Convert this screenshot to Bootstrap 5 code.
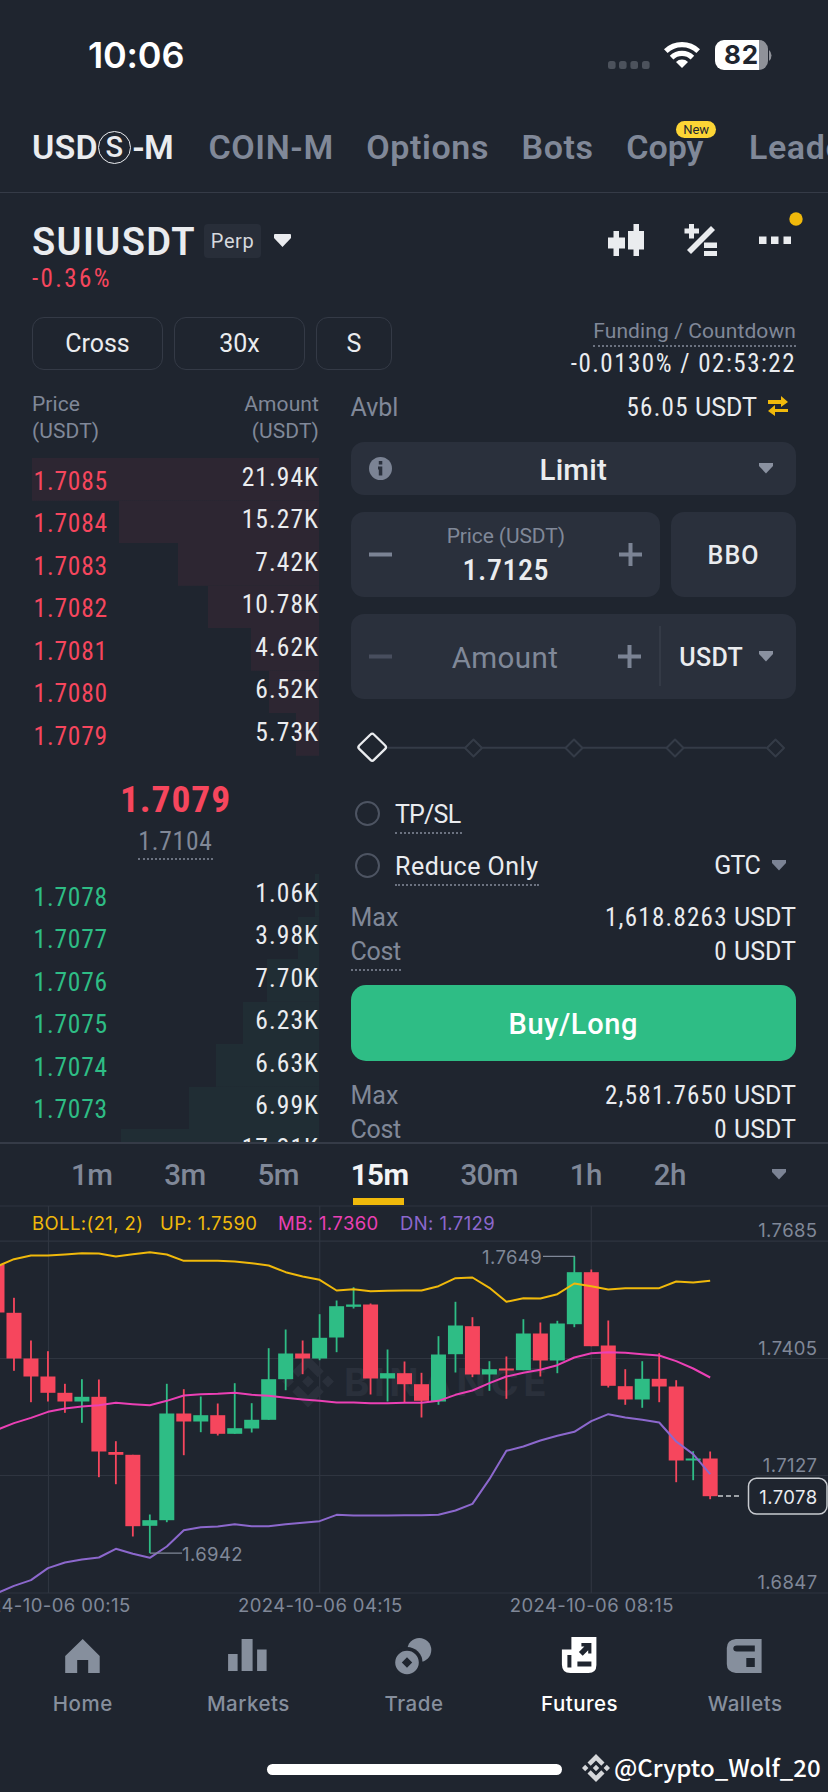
<!DOCTYPE html>
<html lang="en" data-bs-theme="dark">
<head>
<meta charset="utf-8">
<meta name="viewport" content="width=device-width, initial-scale=1">
<title>SUIUSDT Perp</title>
<link rel="stylesheet" href="https://cdn.jsdelivr.net/npm/bootstrap@5.3.0/dist/css/bootstrap.min.css">
<style>
  :root { --bg:#1f252f; --panel:#2a303c; --edge:#323843; --ink:#eaecef; --dim:#808898; --red:#f6465d; --green:#2ebd85; --gold:#f0b90b; }
  body { background:var(--bg); color:var(--ink); font-family:Roboto,"Liberation Sans",sans-serif; font-size:25px; line-height:30px; }
  svg { display:block; flex:none; }
  .screen { width:828px; height:1792px; overflow:hidden; }
  .dim { color:var(--dim); }
  .red { color:var(--red); }
  .green { color:var(--green); }
  .din { font-family:"Roboto Condensed",Roboto,sans-serif; letter-spacing:1.25px; }
  .dotted { border-bottom:2px dotted #6b7280; }
  .status { height:110px; font-family:Inter,sans-serif; padding:0 56px 0 88px; }
  .clock { font-size:36px; font-weight:600; color:#fff; letter-spacing:-.2px; }
  .battery { width:53px; height:30px; border-radius:9px; background:linear-gradient(90deg,#fff 0 44px,#8f9299 44px); color:var(--bg); font-size:26px; font-weight:700; letter-spacing:.8px; }
  .tabs { height:82px; padding:0 0 8px 32px; gap:32.500px; font-size:34px; font-weight:600; color:var(--dim); white-space:nowrap; letter-spacing:.6px; }
  .tabs .on { color:var(--ink); letter-spacing:.2px; margin-right:3px; }
  .ring { width:33px; height:33px; border:1.5px solid var(--ink); border-radius:50%; font-size:29px; font-weight:500; }
  .newtag { top:-11px; left:50px; width:40px; height:17px; border-radius:9px; background:#fcd535; color:#202630; font-size:13px; font-weight:400; line-height:17px; letter-spacing:0; }
  .rule { height:1px; background:#353b47; }
  .pair { font-size:38px; font-weight:600; letter-spacing:1.4px; line-height:42px; }
  .perp { width:57px; height:34px; background:#282e39; border-radius:4px; font-size:20px; letter-spacing:.6px; color:#d6d9de; }
  .chip { height:53px; border:1.5px solid #343a46; border-radius:12px; color:var(--ink); font-size:25px; line-height:28px; }
  .small-cap { font-size:21px; line-height:27px; letter-spacing:.1px; }
  .book { width:287px; font-size:25.5px; }
  .lvl { height:42.5px; padding-top:3px; letter-spacing:1.05px; }
  .lvl .amt { padding-bottom:8px; }
  .lvl .prc { padding-left:1.5px; letter-spacing:.8px; }
  .ask { background:linear-gradient(#2d2632,#2d2632) right/var(--w) 100% no-repeat; }
  .bid { background:linear-gradient(#202d34,#202d34) right/var(--w) 100% no-repeat; }
  .ticket { width:445.5px; }
  .panel { background:var(--panel); border-radius:13px; }
  .opt { width:25px; height:25px; border:2px solid #4d5462; border-radius:50%; }
  .buy { height:76.5px; border-radius:15px; background:var(--green); color:#fff; font-size:29px; font-weight:500; letter-spacing:.6px; line-height:76px; }
  .frames { height:61px; gap:52px; padding-left:71px; font-size:29.5px; font-weight:500; color:var(--dim); letter-spacing:-.6px; }
  .frames > div { padding-top:2px; }
  .frames .on { color:#f2f3f5; font-weight:700; }
  .frames .on::after { content:""; position:absolute; left:2px; width:51.5px; height:6.5px; bottom:0; background:var(--gold); }
  .plot { font-family:Inter,sans-serif; font-size:18.5px; letter-spacing:.4px; }
  .dock { font-family:Inter,sans-serif; font-size:20.5px; font-weight:500; letter-spacing:.5px; color:#868f9d; }
  .bar-home { width:295px; height:11px; border-radius:6px; background:#fff; }
  .handle { font-family:"Noto Sans CJK SC",sans-serif; font-size:24px; font-weight:500; color:#fff; margin-top:-4px; }
</style>
</head>
<body>
<div class="screen">

  <header class="status d-flex align-items-center justify-content-between">
    <div class="clock">10:06</div>
    <div class="d-flex align-items-center">
      <svg width="44" height="8" viewBox="0 0 44 8" fill="#4c525c" style="margin:19px 12px 0 0"><rect x="1" width="7.6" height="8" rx="2.5"/><rect x="12" width="7.6" height="8" rx="2.5"/><rect x="23.400" width="7.6" height="8" rx="2.5"/><rect x="35" width="7.6" height="8" rx="2.5"/></svg>
      <svg width="38" height="28" viewBox="0 0 38 28" fill="none" stroke="#fff" stroke-width="5.200"><path d="M2.800 10.200A23.500 23.500 0 0 1 35.200 10.200"/><path d="M8.600 16.600A15 15 0 0 1 29.400 16.600"/><path d="M19 27 13 21A8.500 8.500 0 0 1 25 21Z" fill="#fff" stroke="none"/></svg>
      <div class="battery d-flex align-items-center justify-content-center" style="margin-left:14px">82</div>
      <svg width="4" height="11" viewBox="0 0 4 11"><path d="M1 0Q3.500 2 3.500 5.500T1 11Z" fill="#8f9299"/></svg>
    </div>
  </header>

  <nav class="tabs d-flex align-items-center">
    <div class="on d-flex align-items-center">USD<span class="ring d-flex align-items-center justify-content-center">S</span><span style="letter-spacing:-.8px;margin-left:1.500px">-M</span></div>
    <div>COIN-M</div><div>Options</div><div>Bots</div>
    <div class="position-relative" style="letter-spacing:0;margin-right:13px">Copy<span class="newtag position-absolute text-center">New</span></div>
    <div>Leaderboard</div>
  </nav>
  <div class="rule"></div>

  <section class="d-flex justify-content-between" style="height:124px;padding:28px 25px 0 32px">
    <div>
      <div class="d-flex align-items-center">
        <div class="pair">SUIUSDT</div>
        <div class="perp d-flex align-items-center justify-content-center" style="margin:-2px 0 0 8px">Perp</div>
        <svg width="18" height="14" viewBox="0 0 18 14" style="margin:-2px 0 0 13px"><path d="M0 1Q0 0 1 0H16Q17 0 17 1V4L8.500 13 0 4Z" fill="#eaecef"/></svg>
      </div>
      <div class="red din" style="letter-spacing:2.400px;line-height:31px">-0.36%</div>
    </div>
    <svg width="195" height="50" viewBox="608 208 195 50" fill="#eaecef" style="margin-top:-13px">
      <path d="M608 237.500h5.500v-6.500h5.500v6.500h6v11h-6v7.500h-5.500v-7.500h-5.500zM628 231h5.500v-7h5.500v7h5v18.500h-5v6.500h-5.500v-6.500h-5.500z"/>
      <path d="M689 224h5v4.500h5v5h-5v5h-5v-5h-4.500v-5h4.500zM711 226l4 4-24 24-4-4zM704 242.500h13v5.500h-13zM704 251h13v5h-13z"/>
      <path d="M759 236.500h7.500v7.500h-7.500zM771 236.500h7.500v7.500h-7.500zM783.500 236.500h7.500v7.500h-7.500z"/><circle cx="796" cy="219" r="6.700" fill="#f0b90b"/>
    </svg>
  </section>

  <section class="d-flex justify-content-between" style="height:73px;padding:0 32px">
    <div class="d-flex" style="gap:11px">
      <button class="btn chip p-0" style="width:131px">Cross</button>
      <button class="btn chip p-0" style="width:131px">30x</button>
      <button class="btn chip p-0" style="width:76px">S</button>
    </div>
    <div class="text-end">
      <div class="small-cap dim" style="height:30px"><span class="dotted d-inline-block" style="height:30px;line-height:29px">Funding / Countdown</span></div>
      <div class="din" style="letter-spacing:1.500px;line-height:34px">-0.0130% / 02:53:22</div>
    </div>
  </section>

  <main class="d-flex justify-content-between overflow-hidden" style="height:752px;padding:0 32px">
    <div class="book">
      <div class="d-flex justify-content-between small-cap dim" style="height:68px;padding-top:1px"><div>Price<br>(USDT)</div><div class="text-end">Amount<br>(USDT)</div></div>
      <div id="asks"></div>
      <div class="text-center" style="height:118.500px;padding-top:19px">
        <div class="red din fw-bold" style="font-size:37.500px;line-height:48px;letter-spacing:.9px">1.7079</div>
        <div class="dim din dotted d-inline-block" style="line-height:37px;height:37px;letter-spacing:.8px">1.7104</div>
      </div>
      <div id="bids"></div>
    </div>

    <div class="ticket">
      <div class="d-flex align-items-center" style="height:36px;margin-bottom:16px">
        <span class="dim me-auto">Avbl</span><span class="din">56.05</span><span>&nbsp;USDT</span>
        <svg width="22" height="20" viewBox="0 0 22 20" fill="#f0b90b" style="margin:-4px 7px 0 10px"><path d="M1 4h13V0l7 6-7 5V8H1zM21 13H8V9l-7 6 7 5v-4h13z"/></svg>
      </div>

      <div class="panel d-flex align-items-center" style="height:52.500px;padding:0 23px 0 18px">
        <svg width="23" height="23" viewBox="0 0 23 23"><circle cx="11.500" cy="11.500" r="11.500" fill="#7b8394"/><path d="M9.800 4h3.500v3.500H9.800zM9 9.500h4.300v9H9.800v-6H9z" fill="#2a303c"/></svg>
        <span class="flex-fill text-center" style="font-size:29.500px;font-weight:500;margin:4px 4px 0 0;letter-spacing:.2px">Limit</span>
        <svg width="14" height="11" viewBox="0 0 14 11"><path d="M0 0H14V3L7 10.500 0 3Z" fill="#8a91a0"/></svg>
      </div>

      <div class="d-flex" style="gap:11px;margin-top:17.500px">
        <div class="panel d-flex align-items-center" style="width:309.500px;height:84.500px;padding:0 18px">
          <svg width="23" height="23" viewBox="0 0 23 23"><path d="M0 9.500h23v4H0z" fill="#7b8394"/></svg>
          <div class="flex-fill text-center" style="margin:-3px 0 0 1px"><div class="small-cap dim" style="line-height:34px;letter-spacing:-.1px">Price (USDT)</div><div class="din" style="font-size:30px;font-weight:500;line-height:33px;letter-spacing:.5px">1.7125</div></div>
          <svg width="23" height="23" viewBox="0 0 23 23"><path d="M0 9.500h9.500V0h4v9.500H23v4h-9.500V23h-4v-9.500H0z" fill="#7b8394"/></svg>
        </div>
        <div class="panel flex-fill d-flex align-items-center justify-content-center" style="font-weight:500;letter-spacing:1px;padding-top:4px">BBO</div>
      </div>

      <div class="panel d-flex align-items-center" style="height:85px;margin-top:17px;padding:0 23px 0 18px">
        <svg width="23" height="23" viewBox="0 0 23 23"><path d="M0 9.500h23v4H0z" fill="#484e5e"/></svg>
        <div class="flex-fill text-center dim" style="font-size:29.500px;letter-spacing:.4px;padding-top:4px">Amount</div>
        <svg width="23" height="23" viewBox="0 0 23 23"><path d="M0 9.500h9.500V0h4v9.500H23v4h-9.500V23h-4v-9.500H0z" fill="#7b8394"/></svg>
        <div style="width:2px;height:60px;background:#343a46;margin:0 18px 0 18px"></div>
        <span style="font-weight:500;letter-spacing:.3px;padding-top:4px">USDT</span>
        <svg width="14" height="11" viewBox="0 0 14 11" style="margin-left:16px"><path d="M0 0H14V3L7 10.500 0 3Z" fill="#8a91a0"/></svg>
      </div>

      <svg width="445.500" height="93" viewBox="350.500 699 445.500 93" fill="#1f252f" stroke="#343b47" stroke-width="2" stroke-linejoin="round">
        <path d="M387 747.700H766"/>
        <path d="M473 739.500l8.500 8.500-8.500 8.500-8.500-8.500zM573.500 739.500l8.500 8.500-8.500 8.500-8.500-8.500zM674.500 739.500l8.500 8.500-8.500 8.500-8.500-8.500zM775 739.500l8.500 8.500-8.500 8.500-8.500-8.500z"/>
        <path d="M370 734.500q1.700-1.800 3.400 0l11.300 11q1.700 1.700 0 3.400l-11.300 11q-1.700 1.700-3.400 0l-11.300-11q-1.700-1.700 0-3.400z" stroke="#eaecef" stroke-width="2.300"/>
      </svg>

      <div class="d-flex align-items-center" style="height:44px;margin-left:4.500px"><span class="opt"></span><span class="dotted" style="margin:0 0 0 15px;height:41px;line-height:43px;letter-spacing:-.8px;padding-right:2px">TP/SL</span></div>
      <div class="d-flex align-items-center" style="height:44px;margin:8px 0 0 4.500px"><span class="opt"></span><span class="dotted me-auto" style="margin-left:15px;height:41px;line-height:43px;letter-spacing:.5px">Reduce Only</span><span style="letter-spacing:-.7px">GTC</span><svg width="14" height="11" viewBox="0 0 14 11" style="margin:0 10px 0 12px"><path d="M0 0H14V3L7 10.500 0 3Z" fill="#7b8394"/></svg></div>

      <div class="d-flex" style="height:33.500px;line-height:33px;margin-top:13.500px"><span class="dim me-auto">Max</span><span class="din">1,618.8263</span><span>&nbsp;USDT</span></div>
      <div class="d-flex" style="height:50px;line-height:33px"><span class="dim dotted me-auto" style="height:36px;letter-spacing:-.3px">Cost</span><span class="din">0</span><span>&nbsp;USDT</span></div>
      <button class="btn buy w-100 p-0 d-block border-0"><span style="position:relative;top:1px">Buy/Long</span></button>
      <div class="d-flex" style="height:33.500px;line-height:33px;margin-top:18px"><span class="dim me-auto">Max</span><span class="din">2,581.7650</span><span>&nbsp;USDT</span></div>
      <div class="d-flex" style="height:33.500px;line-height:33px"><span class="dim me-auto" style="letter-spacing:-.3px">Cost</span><span class="din">0</span><span>&nbsp;USDT</span></div>
    </div>
  </main>
  <div class="rule" style="height:1.500px"></div>

  <nav class="frames d-flex align-items-center">
    <div>1m</div><div>3m</div><div>5m</div><div class="on position-relative h-100 d-flex align-items-center">15m</div><div>30m</div><div>1h</div><div>2h</div>
    <svg class="ms-auto" width="14" height="11" viewBox="0 0 14 11" style="margin-right:42px"><path d="M0 0H14V3L7 10.500 0 3Z" fill="#7b8394"/></svg>
  </nav>

  <svg class="plot" width="828" height="415.500" viewBox="0 1204.500 828 415.500" fill="#808898">
    <path d="M0 1205.500H828M0 1240.700H828M0 1358H828M0 1475H828M0 1592.500H828M48.500 1205V1592M319.700 1205V1592M591.300 1205V1592" stroke="#2f3540" stroke-width="1.200" fill="none"/>
    <g fill="#2a303b">
      <path transform="translate(308 1381) scale(1.850)" d="M0-14 8.500-5.500 5.300-2.300 0-7.600-5.300-2.300-8.500-5.500ZM0 14 8.500 5.500 5.300 2.300 0 7.600-5.300 2.300-8.500 5.500ZM0-3.200 3.200 0 0 3.200-3.200 0ZM-10.800-3.200-7.600 0-10.800 3.200-14 0ZM10.800-3.200 14 0 10.800 3.200 7.600 0Z"/>
      <text x="344" y="1395.500" font-size="38.500" font-weight="700" textLength="203">BINANCE</text>
    </g>
    <g id="candles"></g>
    <g id="bands" fill="none" stroke-width="2" stroke-linejoin="round"></g>
    <path d="M543 1255.800H575M150 1552.700H182" stroke="#808898" stroke-width="1.200"/>
    <path d="M718 1495.500H739" stroke="#c8cbd0" stroke-width="1.500" stroke-dasharray="5 3"/>
    <text x="32" y="1229.300" fill="#f0b90b">BOLL:(21, 2)</text><text x="160" y="1229.300" fill="#f0b90b">UP: 1.7590</text><text x="278" y="1229.300" fill="#eb40b5">MB: 1.7360</text><text x="400" y="1229.300" fill="#8c68cd">DN: 1.7129</text>
    <text x="482" y="1263.500">1.7649</text><text x="182" y="1560.200">1.6942</text>
    <g text-anchor="end"><text x="817.500" y="1236.800">1.7685</text><text x="817.500" y="1354">1.7405</text><text x="817.500" y="1471">1.7127</text><text x="817.500" y="1588">1.6847</text></g>
    <g text-anchor="middle"><text x="48.500" y="1611.300">2024-10-06 00:15</text><text x="320.300" y="1611.300">2024-10-06 04:15</text><text x="591.800" y="1611.300">2024-10-06 08:15</text></g>
    <rect x="748.500" y="1477.800" width="78.500" height="35.800" rx="8" fill="#1f252f" stroke="#c8cbd0" stroke-width="1.500"/>
    <text x="817.500" y="1503" text-anchor="end" fill="#eaecef">1.7078</text>
  </svg>

  <nav class="dock d-flex text-center" style="height:134px;padding-top:14px;line-height:28px">
    <div style="width:165.600px"><svg class="mx-auto" width="40" height="44" viewBox="62.800 1634 40 44" fill="currentColor"><path d="M82.500 1639 99.500 1656V1673H88V1660H77V1673H65V1656Z"/></svg><div class="pt-2 mt-1">Home</div></div>
    <div style="width:165.600px"><svg class="mx-auto" width="40" height="44" viewBox="228.400 1634 40 44" fill="currentColor"><path d="M228.500 1654h9.500v17h-9.500zM242 1639h11v32h-11zM257.500 1649.500h9.500v21.500h-9.500z"/></svg><div class="pt-2 mt-1">Markets</div></div>
    <div style="width:165.600px"><svg class="mx-auto" width="40" height="44" viewBox="394 1634 40 44" fill="currentColor"><circle cx="419.300" cy="1650" r="12"/><circle cx="407" cy="1662.500" r="15.500" fill="#1f252f"/><path fill-rule="evenodd" d="M407 1650.700a11.800 11.800 0 1 1 0 23.600a11.800 11.800 0 1 1 0-23.600zM407 1657.300l-5.200 5.200 5.200 5.200 5.200-5.200z"/></svg><div class="pt-2 mt-1">Trade</div></div>
    <div class="text-white" style="width:165.600px"><svg class="mx-auto" width="40" height="44" viewBox="559.600 1634 40 44" fill="currentColor"><path fill-rule="evenodd" d="M571 1637h25v28q0 8-8 8h-18q-8.500 0-8.500-8.500V1649.500H571zM567 1655v12.500h4V1655zM577 1661.500v5h14v-5zM581 1643v3.500h3l-5.500 5.500 3.800 3.800 5.500-5.500v3.200h3.200V1643z"/></svg><div class="pt-2 mt-1">Futures</div></div>
    <div style="width:165.600px"><svg class="mx-auto" width="40" height="44" viewBox="725.200 1634 40 44" fill="currentColor"><path fill-rule="evenodd" d="M736 1639h25.800v34H736q-9-1-9-9v-16q0-8 9-9zM737 1645.500q-3.500 0-3.500 3t3.500 3h18v-6zM746.500 1658v9h8.500v-9z"/></svg><div class="pt-2 mt-1">Wallets</div></div>
  </nav>

  <footer class="d-flex align-items-center" style="height:30px;padding-left:267px">
    <div class="bar-home"></div>
    <svg width="28" height="28" viewBox="-14 -14 28 28" fill="#d5d7da" style="margin:-2px 4px 0 20px"><path d="M0-14 8.500-5.500 5.300-2.300 0-7.600-5.300-2.300-8.500-5.500ZM0 14 8.500 5.500 5.300 2.300 0 7.600-5.300 2.300-8.500 5.500ZM0-3.200 3.200 0 0 3.200-3.200 0ZM-10.800-3.200-7.600 0-10.800 3.200-14 0ZM10.800-3.200 14 0 10.800 3.200 7.600 0Z"/></svg>
    <span class="handle">@Crypto_Wolf_20</span>
  </footer>
</div>

<script src="https://cdn.jsdelivr.net/npm/bootstrap@5.3.0/dist/js/bootstrap.bundle.min.js"></script>
<script>
// Order book: price, amount, depth bar width
const asks = [['1.7085','21.94K',287],['1.7084','15.27K',200],['1.7083','7.42K',141],['1.7082','10.78K',111],['1.7081','4.62K',68],['1.7080','6.52K',50],['1.7079','5.73K',23]];
const bids = [['1.7078','1.06K',4],['1.7077','3.98K',21],['1.7076','7.70K',52],['1.7075','6.23K',76],['1.7074','6.63K',103],['1.7073','6.99K',130],['1.7072','17.21K',198]];
const level = (side, tone) => ([p, a, w]) => `<div class="lvl din ${side} d-flex align-items-center justify-content-between" style="--w:${w}px"><span class="prc ${tone}">${p}</span><span class="amt">${a}</span></div>`;
document.getElementById('asks').innerHTML = asks.map(level('ask','red')).join('');
document.getElementById('bids').innerHTML = bids.map(level('bid','green')).join('');

// Candles: colour, wick top, wick bottom, body top, body bottom
const bars = [
['r',1263.7,1312,1263.7,1312],['r',1297.3,1370.3,1312.3,1358],['r',1340,1401.7,1358,1376],['r',1350.7,1401,1376,1392.3],['r',1383.3,1412.3,1392.3,1401],
['g',1378.7,1422.3,1396.3,1401],['r',1379,1476.7,1396.3,1451],['r',1440.7,1483.7,1451.5,1454.3],['r',1454.3,1536,1454.3,1525.7],['g',1514,1552.7,1519.7,1525.3],
['g',1383.3,1521.7,1413,1519.7],['r',1388.7,1454.7,1413,1421],['g',1396,1431.7,1414.7,1421],['r',1403,1435,1414.7,1433.3],['g',1382.7,1433.3,1427.7,1433.3],
['g',1402.7,1432,1419.3,1428],['g',1347.7,1419.3,1378.7,1419.3],['g',1329,1389.7,1353,1378.7],['r',1340,1373.7,1353,1358],['g',1313.7,1359.7,1337.3,1358],
['g',1300,1351.7,1305.7,1337],['g',1286.7,1308,1304,1306.3],['r',1303,1394,1304,1378],['g',1349,1401,1372.7,1378],['r',1361,1401.7,1372.7,1383.7],
['r',1372.3,1417,1383.7,1400.3],['g',1335.7,1404.3,1354,1401],['g',1301.3,1372,1325,1353.7],['r',1316.7,1376.7,1325.7,1374],['g',1360.7,1390.3,1368.7,1374],
['r',1356,1398.3,1368,1370],['g',1318.7,1369.7,1333,1369.7],['r',1322,1376,1333,1360],['g',1320.3,1372.7,1323,1360],['g',1255.7,1326.7,1271.7,1323.7],
['r',1269,1345.7,1271.7,1345.7],['r',1320,1387,1345,1385.3],['r',1368.7,1404.3,1385.7,1399],['g',1360.7,1407.3,1378.3,1399],['r',1352.7,1401.7,1378.3,1386],
['r',1379.7,1481.7,1386,1460],['g',1450.7,1479.7,1458,1460],['r',1451,1498.7,1458,1495.7]];
const xAt = i => -3 + 16.98 * i;
document.getElementById('candles').innerHTML = bars.map(([c, h, l, t, b], i) =>
  `<g fill="${c === 'r' ? '#f6465d' : '#2ebd85'}"><rect x="${xAt(i) - .9}" y="${h}" width="1.8" height="${l - h}"/><rect x="${xAt(i) - 7.5}" y="${t}" width="15" height="${b - t}"/></g>`).join('');

// Bollinger bands, in thirds of a pixel below the given base line
const bands = [
['#f0b90b',1140,[378,356,345,345,342,338,339,348,341,335,342,361,361,361,363,368,375,395,408,418,450,446,452,451,450,450,437,413,411,442,484,473,474,461,429,437,447,443,443,443,423,426,421]],
['#eb40b5',1140,[868,848,832,814,804,798,794,787,791,794,781,765,761,760,757,763,766,772,777,781,786,786,788,788,787,787,781,763,750,728,708,697,688,674,651,638,635,637,641,645,662,684,711]],
['#8c68cd',1400,[578,556,539,503,486,477,471,445,460,472,438,389,380,378,371,377,377,371,367,362,343,345,345,345,344,344,343,330,310,236,151,138,120,106,94,62,41,51,58,66,123,161,221]]];
document.getElementById('bands').innerHTML = bands.map(([c, base, v]) =>
  `<polyline stroke="${c}" points="${v.map((y, i) => xAt(i) + ',' + (base + y / 3)).join(' ')}"/>`).join('');
</script>
</body>
</html>
